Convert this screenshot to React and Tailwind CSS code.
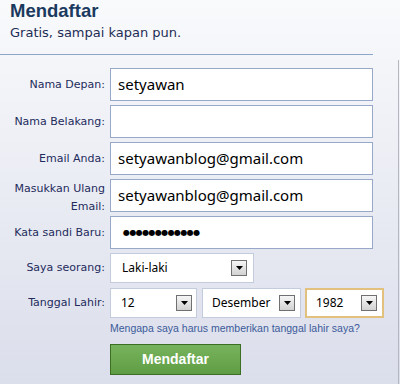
import React from "react";

const labelCls =
  "w-[105px] shrink-0 text-right text-[11px] leading-[18px] text-[#232b5c] font-['DejaVu_Sans',sans-serif]";
const inputCls =
  "ml-[5px] w-[263px] h-[33px] bg-white border border-[#97a8c8] flex items-center pl-[7px] text-[15px] text-black font-['Noto_Sans',sans-serif]";

function Arrow({ mr = "mr-[5px]" }) {
  return (
    <div
      className={`${mr} w-[16px] h-[16px] border border-[#707070] bg-linear-to-b from-[#f6f6f6] to-[#d2d2d2] flex items-center justify-center shrink-0`}
    >
      <svg width="7" height="4" viewBox="0 0 7 4">
        <path d="M0 0H7L3.5 4Z" fill="#000" />
      </svg>
    </div>
  );
}

function Select({ w, value, border = "border border-[#c3ccdd]", pl = "pl-[10px]", mr }) {
  return (
    <div
      className={`${w} h-[30px] bg-white ${border} flex items-center justify-between ${pl} text-[12px] text-black font-['Noto_Sans',sans-serif] shrink-0`}
    >
      <span>{value}</span>
      <Arrow mr={mr} />
    </div>
  );
}

function Row({ label, children, className = "" }) {
  return (
    <div className={`flex items-center ${className}`}>
      <div className={labelCls}>{label}</div>
      {children}
    </div>
  );
}

export default function App() {
  return (
    <div className="w-[400px] h-[384px] overflow-hidden bg-linear-to-b from-[#f9fafc] to-[#dbdeeb] flex flex-col">
      <div className="pl-[10px]">
        <div className="text-[18.5px] leading-[22px] font-bold text-[#1b3a60] font-['Liberation_Sans',sans-serif]">
          Mendaftar
        </div>
        <div className="mt-[2px] text-[13px] leading-[18px] text-[#1d2d55] font-['DejaVu_Sans',sans-serif]">
          Gratis, sampai kapan pun.
        </div>
      </div>
      <div className="mt-[12px] h-px w-[373px] bg-[#8ea7c9]" />
      <div className="mt-[5px] flex-1 w-[399px] border-r border-[#b4b7bf] pt-[8px] flex flex-col">
        <Row label="Nama Depan:" className="h-[33px]">
          <div className={inputCls}>setyawan</div>
        </Row>
        <Row label="Nama Belakang:" className="h-[33px] mt-[4px]">
          <div className={inputCls}></div>
        </Row>
        <Row label="Email Anda:" className="h-[33px] mt-[4px]">
          <div className={inputCls}>setyawanblog@gmail.com</div>
        </Row>
        <Row
          label={
            <div className="pt-[5px]">
              Masukkan Ulang
              <br />
              Email:
            </div>
          }
          className="h-[33px] mt-[4px]"
        >
          <div className={inputCls}>setyawanblog@gmail.com</div>
        </Row>
        <Row label="Kata sandi Baru:" className="h-[33px] mt-[4px]">
          <div className={`${inputCls} pl-[12px]`}>
            <span className="text-[8px] tracking-[-0.6px] font-['DejaVu_Sans',sans-serif]">
              ●●●●●●●●●●●●
            </span>
          </div>
        </Row>
        <Row label="Saya seorang:" className="mt-[4px]">
          <div className="ml-[5px]">
            <Select w="w-[144px]" value="Laki-laki" pl="pl-[11px]" mr="mr-[6px]" />
          </div>
        </Row>
        <Row label="Tanggal Lahir:" className="mt-[5px]">
          <div className="ml-[5px] flex">
            <Select w="w-[87px]" value="12" pl="pl-[10px]" mr="mr-[4px]" />
            <div className="ml-[5px]">
              <Select w="w-[99px]" value="Desember" pl="pl-[9px]" mr="mr-[5px]" />
            </div>
            <div className="ml-[4px]">
              <Select
                w="w-[79px]"
                value="1982"
                border="border-2 border-[#e2c07e]"
                pl="pl-[9px]"
                mr="mr-[5px]"
              />
            </div>
          </div>
        </Row>
        <div className="ml-[110px] mt-[3px] text-[10.5px] leading-[14px] text-[#3b5a99] font-['Liberation_Sans',sans-serif]">
          Mengapa saya harus memberikan tanggal lahir saya?
        </div>
        <div className="ml-[110px] mt-[9px]">
          <button className="w-[131px] h-[31px] border border-[#3c6e24] bg-linear-to-b from-[#77b35c] to-[#5f9d44] text-white text-[14px] font-bold font-['Liberation_Sans',sans-serif] flex items-center justify-center">
            Mendaftar
          </button>
        </div>
      </div>
    </div>
  );
}
